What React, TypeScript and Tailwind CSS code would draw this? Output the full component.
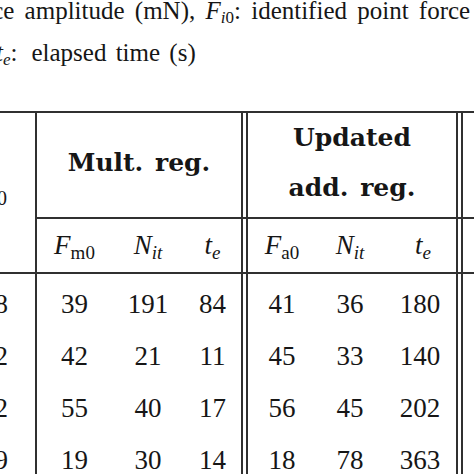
import type { ReactNode } from "react";

// Cropped view of a results table: caption lines on top, then a grid with
// single and double rules between the column groups.

type Row = { lead: string; mult: number[]; add: number[] };

const rows: Row[] = [
  { lead: "38", mult: [39, 191, 84], add: [41, 36, 180] },
  { lead: "42", mult: [42, 21, 11], add: [45, 33, 140] },
  { lead: "52", mult: [55, 40, 17], add: [56, 45, 202] },
  { lead: "19", mult: [19, 30, 14], add: [18, 78, 363] },
];

const rowCls = [
  "[grid-row:6] pt-[4px]",
  "[grid-row:7]",
  "[grid-row:8]",
  "[grid-row:9]",
];
const multCols = ["[grid-column:3]", "[grid-column:4]", "[grid-column:5]"];
const addCols = ["[grid-column:7]", "[grid-column:8]", "[grid-column:9]"];

function Sym({ base, sub, subItalic }: { base: string; sub: string; subItalic?: boolean }) {
  return (
    <span className="whitespace-nowrap">
      <i>{base}</i>
      <sub className={`text-[19px] ${subItalic ? "italic" : ""}`}>{sub}</sub>
    </span>
  );
}

function Cell({ className, children }: { className: string; children?: ReactNode }) {
  return <div className={`flex items-center justify-center ${className}`}>{children}</div>;
}

export default function App() {
  return (
    <div className="w-[474px] h-[474px] overflow-hidden bg-white text-[#161616] font-['Liberation_Serif',serif]">
      {/* Caption */}
      <div className="-mt-[10px] ml-[-37px] h-[42px] leading-[42px] text-[25px] [word-spacing:4px] whitespace-nowrap">
        force amplitude (mN), <i>F</i>
        <sub className="text-[17px]">
          <i>i</i>0
        </sub>
        : identified point force amplitude (mN)
      </div>
      <div className="ml-[-4px] h-[42px] leading-[42px] text-[25px] [word-spacing:3px] whitespace-nowrap">
        <i>t</i>
        <sub className="text-[17px] italic">e</sub>:<span className="ml-[14px]">elapsed time (s)</span>
      </div>

      {/* Table */}
      <div className="mt-[37px] grid grid-cols-[35px_2px_75px_72px_57px_7px_68px_68px_72px_7px_1fr] grid-rows-[2px_104px_2px_53px_2px_56px_52px_52px_52px]">
        {/* rules */}
        <div className="[grid-column:1/-1] [grid-row:1] bg-[#303030]" />
        <div className="[grid-column:2/-1] [grid-row:3] bg-[#303030]" />
        <div className="[grid-column:1/-1] [grid-row:5] bg-[#303030]" />
        <div className="[grid-column:2] [grid-row:1/-1] bg-[#303030]" />
        <div className="[grid-column:6] [grid-row:1/-1] border-x-2 border-[#303030]" />
        <div className="[grid-column:10] [grid-row:1/-1] border-x-2 border-[#303030]" />

        {/* header */}
        <div className="[grid-column:1] [grid-row:2/5] flex items-center justify-end pr-[28px] text-[27px] whitespace-nowrap">
          <i>F</i>
          <sub className="text-[20px]">
            <i>s</i>0
          </sub>
        </div>
        <Cell className="[grid-column:3/6] [grid-row:2] pb-[4px] font-['DejaVu_Serif',serif] text-[25px] font-bold [word-spacing:3px] whitespace-nowrap">
          Mult. reg.
        </Cell>
        <Cell className="[grid-column:7/10] [grid-row:2] pb-[4px] font-['DejaVu_Serif',serif] text-[25px] font-bold [word-spacing:3px]">
          <div className="flex flex-col items-center leading-[50px] whitespace-nowrap">
            <span>Updated</span>
            <span>add. reg.</span>
          </div>
        </Cell>

        <Cell className="[grid-column:3] [grid-row:4] text-[27px]">
          <Sym base="F" sub="m0" />
        </Cell>
        <Cell className="[grid-column:4] [grid-row:4] text-[27px]">
          <Sym base="N" sub="it" subItalic />
        </Cell>
        <Cell className="[grid-column:5] [grid-row:4] text-[27px]">
          <Sym base="t" sub="e" subItalic />
        </Cell>
        <Cell className="[grid-column:7] [grid-row:4] text-[27px]">
          <Sym base="F" sub="a0" />
        </Cell>
        <Cell className="[grid-column:8] [grid-row:4] text-[27px]">
          <Sym base="N" sub="it" subItalic />
        </Cell>
        <Cell className="[grid-column:9] [grid-row:4] pl-[6px] text-[27px]">
          <Sym base="t" sub="e" subItalic />
        </Cell>

        {/* body */}
        {rows.map((r, i) => (
          <div key={r.lead + i} className="contents">
            <div
              className={`[grid-column:1] ${rowCls[i]} flex items-center justify-end pr-[27px] text-[27px] leading-none whitespace-nowrap`}
            >
              {r.lead}
            </div>
            {r.mult.map((v, j) => (
              <Cell key={"m" + j} className={`${multCols[j]} ${rowCls[i]} text-[27px] leading-none`}>
                {v}
              </Cell>
            ))}
            {r.add.map((v, j) => (
              <Cell key={"a" + j} className={`${addCols[j]} ${rowCls[i]} text-[27px] leading-none`}>
                {v}
              </Cell>
            ))}
          </div>
        ))}
      </div>
    </div>
  );
}
